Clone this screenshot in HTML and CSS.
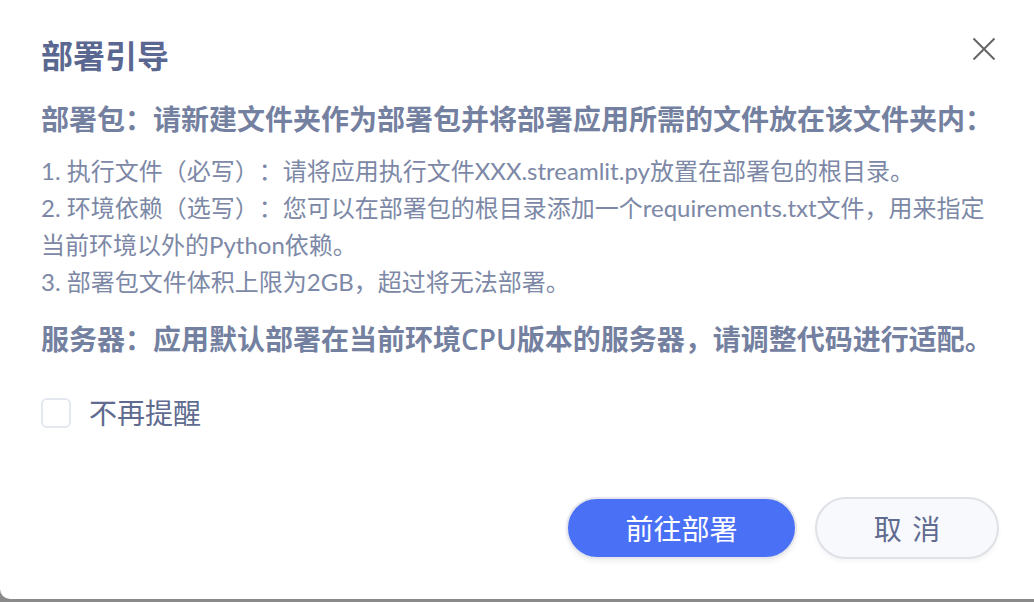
FILE: index.html
```html
<!DOCTYPE html>
<html lang="zh-CN">
<head>
<meta charset="utf-8">
<title>部署引导</title>
<link rel="stylesheet" href="styles.css">
</head>
<body>
<div class="dialog">
  <div class="header">
    <h1 class="title">部署引导</h1>
    <button class="close" aria-label="关闭">
      <svg width="24" height="24" viewBox="0 0 24 24"><path d="M1.5 1.5 L22.5 22.5 M22.5 1.5 L1.5 22.5" stroke="#666" stroke-width="2" fill="none" stroke-linecap="butt"/></svg>
    </button>
  </div>
  <div class="body">
    <h2 class="section">部署包：请新建文件夹作为部署包并将部署应用所需的文件放在该文件夹内：</h2>
    <ol class="list">
      <li>1. 执行文件（必写）：请将应用执行文件XXX.streamlit.py放置在部署包的根目录。</li>
      <li>2. 环境依赖（选写）：您可以在部署包的根目录添加一个requirements.txt文件，用来指定当前环境以外的Python依赖。</li>
      <li>3. 部署包文件体积上限为2GB，超过将无法部署。</li>
    </ol>
    <h2 class="section section-server">服务器：应用默认部署在当前环境CPU版本的服务器，请调整代码进行适配。</h2>
    <label class="remember">
      <span class="checkbox"></span>
      <span class="remember-text">不再提醒</span>
    </label>
  </div>
  <div class="footer">
    <button class="btn btn-primary">前往部署</button>
    <button class="btn btn-default">取 消</button>
  </div>
</div>
</body>
</html>
```
FILE: styles.css
```css
html, body {
  margin: 0;
  padding: 0;
}
body {
  width: 1034px;
  height: 602px;
  overflow: hidden;
  background: #8a8a8a;
  font-family: "Open Sans", "Noto Sans CJK SC", sans-serif;
  text-spacing-trim: space-all;
}
.dialog {
  width: 1034px;
  height: 599px;
  background: #fff;
  border-radius: 0 0 0 10px;
  box-sizing: border-box;
  padding: 35px 35px 0 41px;
  display: flex;
  flex-direction: column;
}
.header {
  display: flex;
  justify-content: space-between;
  align-items: flex-start;
}
.title {
  margin: 0;
  font-size: 32px;
  line-height: 42px;
  font-weight: 600;
  color: #5a6790;
}
.close {
  margin: 2px 3px 0 0;
  padding: 0;
  border: 0;
  background: transparent;
  width: 24px;
  height: 24px;
  cursor: pointer;
}
.close svg { display: block; }
.body {
  padding-right: 0;
}
.section {
  margin: 22px 0 0;
  font-size: 28px;
  line-height: 40px;
  font-weight: 600;
  color: #74809f;
  white-space: nowrap;
}
.list {
  list-style: none;
  margin: 13px 0 0;
  padding: 0;
  font-family: "Lato", "Noto Sans CJK SC", sans-serif;
  font-size: 24px;
  line-height: 37px;
  color: #7c88a6;
}
.section-server {
  margin-top: 19px;
}
.remember {
  margin-top: 39px;
  display: flex;
  align-items: center;
  gap: 18px;
}
.checkbox {
  width: 30px;
  height: 30px;
  box-sizing: border-box;
  border: 2px solid #e3e8f0;
  border-radius: 6px;
  background: #fff;
}
.remember-text {
  font-size: 28px;
  line-height: 30px;
  color: #5f6b8f;
}
.footer {
  margin-top: 69px;
  display: flex;
  justify-content: flex-end;
  gap: 18px;
}
.btn {
  height: 62px;
  border-radius: 31px;
  font-family: "Noto Sans CJK SC", sans-serif;
  font-size: 28px;
  box-sizing: border-box;
  cursor: pointer;
  padding: 0;
}
.btn-primary {
  width: 231px;
  background: #4a70f5;
  color: #fff;
  border: 2px solid #e6e7ec;
  box-shadow: 0 3px 4px rgba(0, 0, 0, 0.06);
}
.btn-default {
  width: 184px;
  background: #f8f9fc;
  color: #5f6b8f;
  border: 2px solid #dfe1e7;
  box-shadow: 0 3px 4px rgba(0, 0, 0, 0.04);
  word-spacing: 4px;
}
```
